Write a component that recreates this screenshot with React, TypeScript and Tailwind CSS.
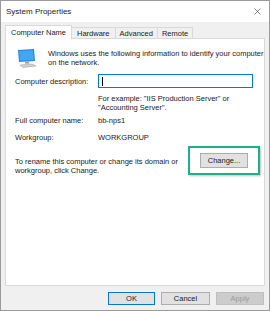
import { X } from 'lucide-react';

function ComputerIcon() {
  return (
    <svg width="22" height="20" viewBox="0 0 22 20">
      <polygon points="2,2 18,1 19,13 3,14" fill="#1e88e5" />
      <polygon points="3,3 17,2.2 17.8,12 4,12.8" fill="#42a5f5" />
      <polygon points="9,14 13,13.6 13.4,15.5 9.2,15.8" fill="#9e9e9e" />
      <polygon points="4,17 16,16 20,18 7,19.5" fill="#d0d0d0" stroke="#9a9a9a" strokeWidth="0.5" />
    </svg>
  );
}

export default function App() {
  const font = { fontFamily: '"Liberation Sans", Arial, sans-serif' };
  return (
    <div className="w-[270px] h-[311px] border border-[#9a9a9a] bg-[#f0f0f0] flex flex-col text-[7.5px] leading-[9px] text-[#1a1a1a] whitespace-nowrap" style={font}>
      {/* Title bar */}
      <div className="h-[21px] bg-white flex items-center justify-between pl-[5px] pr-[6px] shrink-0">
        <span className="text-[8px] text-[#222]">System Properties</span>
        <X className="w-[11px] h-[11px] text-[#333]" strokeWidth={1.3} />
      </div>

      <div className="flex-1 flex flex-col px-[4px] pt-[3px]">
        {/* Tabs */}
        <div className="flex items-end h-[14px] relative z-10 -mb-px">
          <div className="h-[14px] px-[5px] bg-white border border-b-0 border-[#d9d9d9] flex items-center">Computer Name</div>
          <div className="h-[12px] px-[5px] border border-b-0 border-l-0 border-[#d9d9d9] flex items-center">Hardware</div>
          <div className="h-[12px] px-[4px] border border-b-0 border-l-0 border-[#d9d9d9] flex items-center">Advanced</div>
          <div className="h-[12px] px-[4px] border border-b-0 border-l-0 border-[#d9d9d9] flex items-center">Remote</div>
        </div>

        {/* Panel */}
        <div className="h-[248px] bg-white border border-[#d9d9d9] pl-[9px] pr-[8px] pt-[9px]">
          <div className="flex gap-[10px]">
            <div className="pl-px"><ComputerIcon /></div>
            <div className="pt-px">
              <p>Windows uses the following information to identify your computer</p>
              <p>on the network.</p>
            </div>
          </div>

          <div className="flex items-center mt-[6px]">
            <span className="w-[83px]">Computer description:</span>
            <div className="w-[155px] h-[14px] border border-[#0078d7] flex items-center pl-[3px]">
              <span className="w-px h-[9px] bg-black" />
            </div>
          </div>
          <div className="pl-[83px] mt-[6px]">
            <p>For example: "IIS Production Server" or</p>
            <p>"Accounting Server".</p>
          </div>

          <div className="flex mt-[4px]">
            <span className="w-[83px]">Full computer name:</span>
            <span>bb-nps1</span>
          </div>
          <div className="flex mt-[8px]">
            <span className="w-[83px]">Workgroup:</span>
            <span>WORKGROUP</span>
          </div>

          <div className="flex items-start mt-[4px]">
            <div className="flex-1 pt-[11px]">
              <p>To rename this computer or change its domain or</p>
              <p>workgroup, click Change.</p>
            </div>
            <div className="border-2 border-[#1fae8c] px-[10px] py-[5px] shadow-[1px_1px_2px_rgba(0,0,0,0.25)] -mr-[4px]">
              <button className="w-[48px] h-[15px] bg-[#e1e1e1] border border-[#adadad] flex items-center justify-center">Change...</button>
            </div>
          </div>
        </div>

        {/* Footer buttons */}
        <div className="flex justify-end gap-[6px] mt-[6px] pr-px">
          <button className="w-[47px] h-[13px] bg-[#e1e1e1] border border-[#0078d7] flex items-center justify-center">OK</button>
          <button className="w-[49px] h-[13px] bg-[#e1e1e1] border border-[#adadad] flex items-center justify-center">Cancel</button>
          <button className="w-[48px] h-[13px] bg-[#cccccc] border border-[#bfbfbf] text-[#9a9a9a] flex items-center justify-center">Apply</button>
        </div>
      </div>
    </div>
  );
}
